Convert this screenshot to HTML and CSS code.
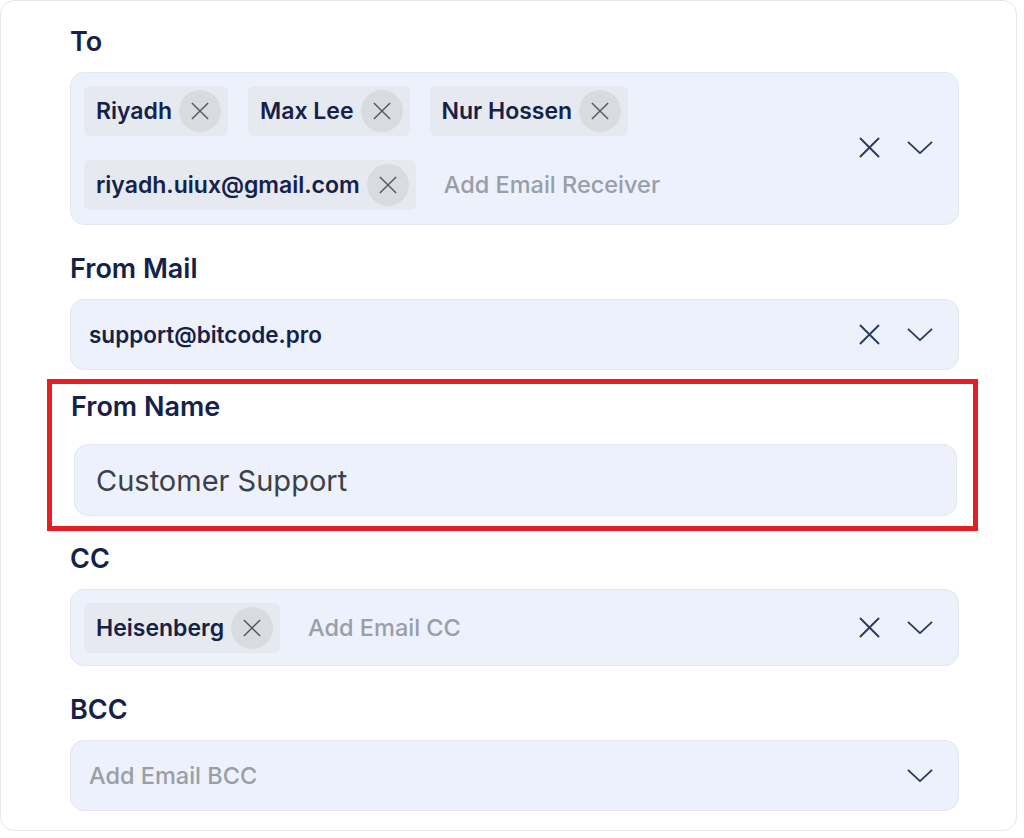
FILE: index.html
```html
<!DOCTYPE html>
<html>
<head>
    <meta http-equiv="Content-Type" content="text/html; charset=UTF-8">
    <title>Email settings</title>
    <link rel="stylesheet" href="styles.css">
</head>
<body>
<div class="card">
    <div class="field">
        <div class="label">To</div>
        <div class="box box-multi">
            <div class="chips">
                <span class="chip">Riyadh<i class="chip-x"><svg viewBox="0 0 20 20"><path d="M1 1L19 19M19 1L1 19"/></svg></i></span>
                <span class="chip">Max Lee<i class="chip-x"><svg viewBox="0 0 20 20"><path d="M1 1L19 19M19 1L1 19"/></svg></i></span>
                <span class="chip">Nur Hossen<i class="chip-x"><svg viewBox="0 0 20 20"><path d="M1 1L19 19M19 1L1 19"/></svg></i></span>
                <span class="chip">riyadh.uiux@gmail.com<i class="chip-x"><svg viewBox="0 0 20 20"><path d="M1 1L19 19M19 1L1 19"/></svg></i></span>
                <span class="placeholder">Add Email Receiver</span>
            </div>
            <div class="tools">
                <svg class="ic-x" viewBox="0 0 22 22"><path d="M1 1L21 21M21 1L1 21"/></svg>
                <svg class="ic-down" viewBox="0 0 28 14"><path d="M1 1L14 13L27 1"/></svg>
            </div>
        </div>
    </div>

    <div class="field gap-l">
        <div class="label">From Mail</div>
        <div class="box box-single">
            <span class="value">support@bitcode.pro</span>
            <div class="tools">
                <svg class="ic-x" viewBox="0 0 22 22"><path d="M1 1L21 21M21 1L1 21"/></svg>
                <svg class="ic-down" viewBox="0 0 28 14"><path d="M1 1L14 13L27 1"/></svg>
            </div>
        </div>
    </div>

    <div class="field highlight">
        <div class="label">From Name</div>
        <div class="text-input">Customer Support</div>
    </div>

    <div class="field gap-s">
        <div class="label">CC</div>
        <div class="box box-cc">
            <div class="chips">
                <span class="chip">Heisenberg<i class="chip-x"><svg viewBox="0 0 20 20"><path d="M1 1L19 19M19 1L1 19"/></svg></i></span>
                <span class="placeholder">Add Email CC</span>
            </div>
            <div class="tools">
                <svg class="ic-x" viewBox="0 0 22 22"><path d="M1 1L21 21M21 1L1 21"/></svg>
                <svg class="ic-down" viewBox="0 0 28 14"><path d="M1 1L14 13L27 1"/></svg>
            </div>
        </div>
    </div>

    <div class="field gap-l">
        <div class="label">BCC</div>
        <div class="box box-single">
            <span class="placeholder ph-bcc">Add Email BCC</span>
            <div class="tools">
                <svg class="ic-down" viewBox="0 0 28 14"><path d="M1 1L14 13L27 1"/></svg>
            </div>
        </div>
    </div>
</div>
</body>
</html>
```

FILE: styles.css
```css
body{margin:0; background:#fff; font-family:Inter, "Noto Sans", sans-serif; color:#14224a;}
.card{
    width:1017px; height:831px; box-sizing:border-box;
    border:1px solid #e4e6ea; border-radius:14px;
    padding:27px 0 0 69px;
}
.field{width:889px;}
.gap-l{margin-top:30px;}
.gap-s{margin-top:14px;}
.label{font-size:27px; line-height:28px; font-weight:600; color:#14224a; margin-bottom:16px;}

.box{
    display:flex; align-items:center; box-sizing:border-box;
    background:#ecf1fb; border:1px solid #e1e6ef; border-radius:14px;
    padding:0 25px 0 13px;
}
.box-multi{height:153px; padding-top:13px; padding-bottom:15px;}
.box-single{height:71px; padding-left:18px;}
.box-cc{height:77px;}
.chips{flex:1; display:flex; flex-wrap:wrap; align-items:center; column-gap:20px; row-gap:24px;}
.chip{
    display:inline-flex; align-items:center; height:50px; box-sizing:border-box;
    padding:0 7px 0 12px; background:#e6e9f0; border-radius:6px;
    font-size:23px; font-weight:600; color:#14224a;
}
.chip-x{
    display:flex; align-items:center; justify-content:center;
    width:42px; height:42px; margin-left:7px; border-radius:50%; background:#d9dbe0;
}
.chip-x svg{width:18px; height:18px; fill:none; stroke:#50545c; stroke-width:1.5;}
.placeholder{font-size:23.5px; font-weight:500; color:#9a9ea7; margin-left:8px;}
.ph-bcc{margin-left:0; flex:1;}
.value{flex:1; font-size:22.5px; font-weight:600; color:#14224a;}

.tools{display:flex; align-items:center; gap:27px;}
.ic-x{width:21px; height:21px; fill:none; stroke:#2a3a60; stroke-width:2;}
.ic-down{width:26px; height:13px; fill:none; stroke:#2a3a60; stroke-width:2;}

.highlight{
    width:931px; box-sizing:border-box; margin:9px 0 0 -23px;
    border:5px solid #e31e24; padding:9px 16px 10px 19px;
}
.highlight .label{margin-bottom:23px;}
.text-input{
    height:72px; box-sizing:border-box; margin-left:3px;
    display:flex; align-items:center; padding-left:21px;
    background:#ecf1fb; border:1px solid #e1e6ef; border-radius:14px;
    font-size:29px; color:#3b404b;
}
```
